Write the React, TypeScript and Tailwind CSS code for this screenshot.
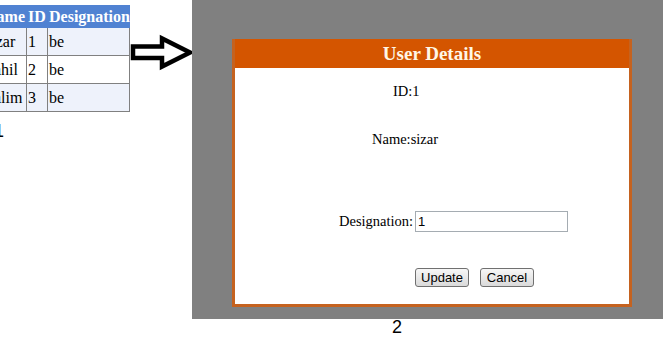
import React from 'react';

const rows = [
  { name: 'sizar', id: 1, designation: 'be' },
  { name: 'Sahil', id: 2, designation: 'be' },
  { name: 'Salim', id: 3, designation: 'be' },
];

function UserTable() {
  return (
    <table className="mt-[5px] w-[146px] table-fixed border-separate border-spacing-0 font-['Liberation_Serif',serif] text-[16px] text-black">
      <thead>
        <tr className="h-[23px] bg-[#5082d2] text-white">
          <th className="w-[43px] px-[1px] text-left font-bold leading-none">Name</th>
          <th className="w-[21px] px-[1px] text-left font-bold leading-none">ID</th>
          <th className="w-[82px] px-[1px] text-left font-bold leading-none">Designation</th>
        </tr>
      </thead>
      <tbody>
        {rows.map((row, index) => (
          <tr key={row.id} className={index % 2 === 0 ? 'h-[28px] bg-[#eef2fb]' : 'h-[28px] bg-white'}>
            <td className="border-r border-b border-[#808080] px-[1px] leading-none">{row.name}</td>
            <td className="border-r border-b border-[#808080] px-[1px] leading-none">{row.id}</td>
            <td className="border-r border-b border-[#808080] px-[1px] leading-none">{row.designation}</td>
          </tr>
        ))}
      </tbody>
    </table>
  );
}

function Arrow() {
  return (
    <svg width="66" height="36" viewBox="0 0 66 36" className="mt-[35px] overflow-visible">
      <polygon
        points="3,11.5 32,11.5 32,3.5 60,17.5 32,31.5 32,23 3,23"
        fill="white"
        stroke="black"
        strokeWidth="4.5"
        strokeLinejoin="miter"
      />
    </svg>
  );
}

function UserDialog() {
  return (
    <div className="flex h-[268px] w-[400px] flex-col border-[3px] border-t-0 border-[#c5621f] bg-white font-['Liberation_Serif',serif] text-black">
      <div className="flex h-[29px] shrink-0 items-center justify-center bg-[#d45500] pt-[1px] text-[19px] font-bold text-[#fff7e6]">
        User Details
      </div>
      <div className="flex flex-col text-[14.5px] leading-[17px]">
        <div className="mt-[15px] pl-[158px]">ID:1</div>
        <div className="mt-[31px] pl-[137px]">Name:sizar</div>
        <div className="mt-[63px] flex items-center pl-[104px]">
          <span className="mr-[2px]">Designation:</span>
          <input
            defaultValue="1"
            className="h-[21px] w-[153px] border border-[#a5acb2] bg-white px-[2px] font-['Liberation_Sans',sans-serif] text-[13px] text-black outline-none"
          />
        </div>
        <div className="mt-[36px] flex gap-[11px] pl-[180px] font-['Liberation_Sans',sans-serif] text-[13px]">
          <button className="h-[19px] w-[54px] rounded-[3px] border border-[#707070] bg-gradient-to-b from-[#f7f7f7] to-[#dadada] leading-none text-black">
            Update
          </button>
          <button className="h-[19px] w-[54px] rounded-[3px] border border-[#707070] bg-gradient-to-b from-[#f7f7f7] to-[#dadada] leading-none text-black">
            Cancel
          </button>
        </div>
      </div>
    </div>
  );
}

export default function App() {
  return (
    <div className="flex h-[348px] w-[663px] overflow-hidden bg-white">
      {/* screen 1: list */}
      <div className="ml-[-16px] flex w-[146px] shrink-0 flex-col">
        <UserTable />
        <div className="mt-[12px] ml-[10px] font-['Liberation_Sans',sans-serif] text-[18px] leading-[14px] text-black">1</div>
      </div>

      <div className="w-[62px] shrink-0">
        <Arrow />
      </div>

      {/* screen 2: popup */}
      <div className="flex w-[471px] shrink-0 flex-col">
        <div className="h-[319px] bg-[#808080] pt-[39px] pl-[40px]">
          <UserDialog />
        </div>
        <div className="mt-[1px] pl-[200px] font-['Liberation_Sans',sans-serif] text-[18px] leading-[14px] text-black">2</div>
      </div>
    </div>
  );
}
